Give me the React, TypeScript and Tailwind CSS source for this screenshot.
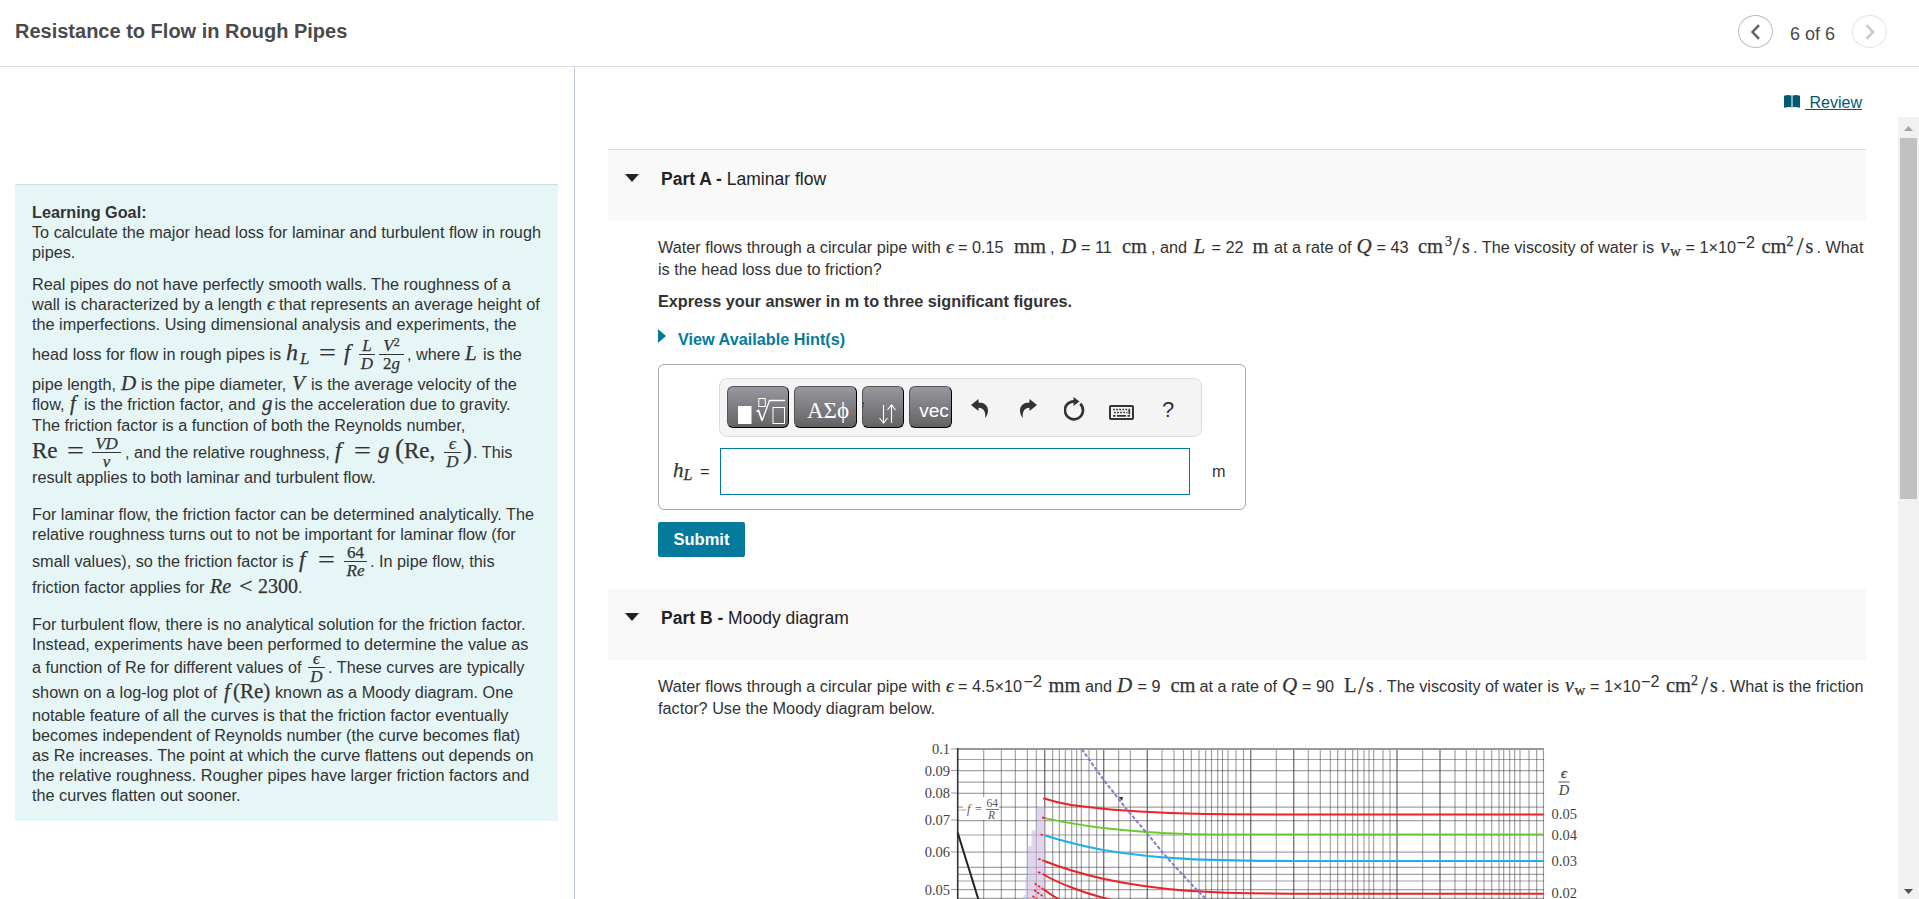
import type { ReactNode } from 'react';

interface BoxProps {
  className?: string;
  children?: ReactNode;
}

const SERIF = "font-['Liberation_Serif','DejaVu_Serif',serif]";

// One line of running text
function Line({ className = '', children }: BoxProps) {
  return <div className={`h-5 leading-5 whitespace-nowrap ${className}`}>{children}</div>;
}

// Text run with its own width
function S({ className = '', children }: BoxProps) {
  return <span className={`inline-block whitespace-pre ${className}`}>{children}</span>;
}

// Math run, never grows the line it sits in
function M({ className = '', children }: BoxProps) {
  return (
    <span className={`inline-block whitespace-pre leading-[0] [-webkit-text-stroke:0.25px] ${SERIF} ${className}`}>
      {children}
    </span>
  );
}

function Frac({ num, den, className = '' }: { num: ReactNode; den: ReactNode; className?: string }) {
  return (
    <span className={`-my-3 inline-flex flex-col items-stretch text-center align-[9px] text-[17px] leading-4 ${className}`}>
      <span className="border-b border-[#333]">{num}</span>
      <span className="mt-px">{den}</span>
    </span>
  );
}

function Eq({ className = '' }: BoxProps) {
  return (
    <M className={className}>
      <span className="inline-block origin-left scale-x-[1.3] not-italic">=</span>
    </M>
  );
}

function Header() {
  return (
    <header className="flex h-[67px] shrink-0 items-start justify-between border-b border-[#ddd] pl-[15px] pr-8">
      <h1 className="mt-[17px] text-[20px] leading-7 font-bold text-[#4a4a4a]">Resistance to Flow in Rough Pipes</h1>
      <div className="mt-[15px] flex items-start">
        <button className="flex h-[33px] w-[35px] items-center justify-center rounded-[50%] border border-[#bbb]">
          <svg width="10" height="16" viewBox="0 0 10 16" fill="none" stroke="#5b6466" strokeWidth="2.5">
            <path d="M8 1.2L1.5 8l6.5 6.8" />
          </svg>
        </button>
        <span className="ml-[17px] mt-[7px] w-[45px] text-[18px] leading-6 whitespace-nowrap text-[#4a4a4a]">6 of 6</span>
        <button className="ml-[17px] flex h-[33px] w-[35px] items-center justify-center rounded-[50%] border border-[#e3e3e3]">
          <svg width="10" height="16" viewBox="0 0 10 16" fill="none" stroke="#c8c8c8" strokeWidth="2.5">
            <path d="M1.5 1.2L8 8l-6.5 6.8" />
          </svg>
        </button>
      </div>
    </header>
  );
}

function LearningGoal() {
  return (
    <div className="mt-[117px] ml-[15px] h-[637px] w-[543px] border-t border-[#cfdfe0] bg-[#e6f6f7] pt-[17px] pl-[17px]">
      <Line className="font-bold">Learning Goal:</Line>
      <Line>To calculate the major head loss for laminar and turbulent flow in rough</Line>
      <Line>pipes.</Line>

      <Line className="mt-3">Real pipes do not have perfectly smooth walls. The roughness of a</Line>
      <Line>
        <S className="w-[235px]">wall is characterized by a length</S>
        <M className="w-[12px] text-[19px] italic">ϵ</M>
        <S>that represents an average height of</S>
      </Line>
      <Line>the imperfections. Using dimensional analysis and experiments, the</Line>
      <Line className="mt-2.5">
        <S className="w-[254px]">head loss for flow in rough pipes is</S>
        <M className="w-[14px] text-[24px] italic">h</M>
        <M className="w-[19px] align-[-4px] text-[17px] italic">L</M>
        <Eq className="w-[25px] text-[23px]" />
        <M className="w-[15px] text-[23px] italic">f</M>
        <M className="w-[20px] italic"><Frac className="w-[16px]" num="L" den="D" /></M>
        <M className="w-[28px] italic">
          <Frac
            className="w-[25px]"
            num={<>V<span className="align-[5px] text-[12px] leading-[0] not-italic">2</span></>}
            den={<><span className="not-italic">2</span>g</>}
          />
        </M>
        <S className="w-[58px]">, where</S>
        <M className="w-[18px] text-[21px] italic">L</M>
        <S>is the</S>
      </Line>
      <Line className="mt-2.5">
        <S className="w-[89px]">pipe length,</S>
        <M className="w-[20px] text-[21px] italic">D</M>
        <S className="w-[151px]">is the pipe diameter,</S>
        <M className="w-[19px] text-[21px] italic">V</M>
        <S>is the average velocity of the</S>
      </Line>
      <Line>
        <S className="w-[38px]">flow,</S>
        <M className="w-[14px] text-[21px] italic">f</M>
        <S className="w-[178px]">is the friction factor, and</S>
        <M className="w-[12.500px] text-[21px] italic">g</M>
        <S>is the acceleration due to gravity.</S>
      </Line>
      <Line className="mt-px">The friction factor is a function of both the Reynolds number,</Line>
      <Line className="mt-[7px]">
        <M className="w-[35px] text-[23px]">Re</M>
        <Eq className="w-[25px] text-[23px]" />
        <M className="w-[33px] italic"><Frac className="w-[29px]" num="VD" den="ν" /></M>
        <S className="w-[210px]">, and the relative roughness,</S>
        <M className="w-[19px] text-[23px] italic">f</M>
        <Eq className="w-[24px] text-[23px]" />
        <M className="w-[17px] text-[23px] italic">g</M>
        <M className="w-[9px] text-[27px]">(</M>
        <M className="w-[40px] text-[23px]">Re,</M>
        <M className="w-[19px] italic"><Frac className="w-[17px]" num="ϵ" den="D" /></M>
        <M className="w-[10px] text-[27px]">)</M>
        <S>. This</S>
      </Line>
      <Line className="mt-[5px]">result applies to both laminar and turbulent flow.</Line>

      <Line className="mt-[17px]">For laminar flow, the friction factor can be determined analytically. The</Line>
      <Line>relative roughness turns out to not be important for laminar flow (for</Line>
      <Line className="mt-[7px]">
        <S className="w-[267px]">small values), so the friction factor is</S>
        <M className="w-[19px] text-[23px] italic">f</M>
        <Eq className="w-[26px] text-[23px]" />
        <M className="w-[26px]"><Frac className="w-[23px]" num="64" den={<i>Re</i>} /></M>
        <S>. In pipe flow, this</S>
      </Line>
      <Line className="mt-[6px]">
        <S className="w-[178px]">friction factor applies for</S>
        <M className="w-[29px] text-[20px] italic">Re</M>
        <M className="w-[19px] text-[20px]"><span className="inline-block origin-left scale-x-[1.2]">&lt;</span></M>
        <M className="w-[40px] text-[20px]">2300</M>
        <S>.</S>
      </Line>

      <Line className="mt-[17px]">For turbulent flow, there is no analytical solution for the friction factor.</Line>
      <Line>Instead, experiments have been performed to determine the value as</Line>
      <Line className="mt-[3px]">
        <S className="w-[276px]">a function of Re for different values of</S>
        <M className="w-[20px] italic"><Frac className="w-[17px]" num="ϵ" den="D" /></M>
        <S>. These curves are typically</S>
      </Line>
      <Line className="mt-[5px]">
        <S className="w-[192px]">shown on a log-log plot of</S>
        <M className="w-[9px] text-[21px] italic">f</M>
        <M className="w-[42px] text-[21px]">(Re)</M>
        <S>known as a Moody diagram. One</S>
      </Line>
      <Line className="mt-[3px]">notable feature of all the curves is that the friction factor eventually</Line>
      <Line>becomes independent of Reynolds number (the curve becomes flat)</Line>
      <Line>as Re increases. The point at which the curve flattens out depends on</Line>
      <Line>the relative roughness. Rougher pipes have larger friction factors and</Line>
      <Line>the curves flatten out sooner.</Line>
    </div>
  );
}

function PartHeader({ part, title, className = '' }: { part: string; title: string; className?: string }) {
  return (
    <div className={`flex w-[1258px] items-start bg-[#f9f9f9] pl-[17px] ${className}`}>
      <svg width="14" height="8" viewBox="0 0 14 8" className="mt-[24px]">
        <path d="M0 0h14L7 8z" fill="#222" />
      </svg>
      <h2 className="ml-[22px] mt-[19px] text-[17.5px] leading-5 whitespace-pre text-[#222]">
        <b>{part} - </b>
        {title}
      </h2>
    </div>
  );
}

function KeypadButton({ className = '', children }: BoxProps) {
  return (
    <button
      className={`h-[42px] overflow-hidden rounded-[6px] border border-t-[#555] border-r-black border-b-black border-l-[#555] bg-linear-to-b from-[#9997a1] to-[#636363] text-white ${className}`}
    >
      {children}
    </button>
  );
}

function AnswerBox() {
  return (
    <div className="mt-[15px] h-[146px] w-[588px] rounded-[6px] border border-[#aaa]">
      <div className="mt-[13px] ml-[60px] flex h-[59px] w-[483px] items-start rounded-[8px] border border-[#ddd] bg-[#f4f4f4] pt-[7px] pl-[7px]">
        <KeypadButton className="w-[62px]">
          <svg width="60" height="40" viewBox="728 387 60 40" fill="none" stroke="#fff">
            <rect x="738" y="406" width="13.5" height="18" fill="#fff" stroke="none" />
            <rect x="758.8" y="398.5" width="6.5" height="8" />
            <path d="M756.5 411.5l2-1 3.6 10" strokeWidth="1.8" />
            <path d="M762 421l7.5-20.5h15.5" strokeWidth="1.3" />
            <rect x="773" y="407.5" width="11.5" height="16" />
          </svg>
        </KeypadButton>
        <KeypadButton className={`ml-[5px] w-[63px] pt-[7px] pl-[5px] text-[23px] ${SERIF}`}>ΑΣϕ</KeypadButton>
        <KeypadButton className="ml-[5px] w-[42px]">
          <svg width="40" height="40" viewBox="863 387 40 40" fill="none" stroke="#fff" strokeWidth="1.1">
            <path d="M883.5 405v18M879.5 418l4 5 4-5M891.5 423v-18M887.5 410l4-5 4 5" />
            <path d="M863.5 402.5v1.5M863.5 405.5v1" stroke="#222" />
          </svg>
        </KeypadButton>
        <KeypadButton className="ml-[5px] w-[43px] pt-[9px] pl-[7px] text-[19px]">vec</KeypadButton>
        <svg width="17" height="19" viewBox="0 0 17 19" fill="#333" className="mt-[13px] ml-[19px]">
          <path d="M0 6L7.5 0v3.4C13.5 3.4 17 6.8 17 11.5c0 3-1.2 5.6-3 7.5C15 14 13.5 9.2 7.5 8.800V12z" />
        </svg>
        <svg width="17" height="19" viewBox="0 0 17 19" fill="#333" className="mt-[13px] ml-[32px]">
          <path d="M17 6L9.500 0v3.400C3.500 3.400 0 6.800 0 11.500c0 3 1.200 5.600 3 7.500C2 14 3.500 9.200 9.500 8.800V12z" />
        </svg>
        <svg width="21" height="24" viewBox="0 0 21 24" className="mt-[11px] ml-[27px]">
          <path d="M16.200 6.800A9 9 0 1 1 10.500 4.300" fill="none" stroke="#333" strokeWidth="2.700" />
          <path d="M9.500 0l6 4.500-6 4.500z" fill="#333" />
        </svg>
        <svg width="25" height="15" viewBox="0 0 25 15" className="mt-[19px] ml-[24px]">
          <rect x="1" y="1" width="23" height="13" rx="1" fill="#f4f4f4" stroke="#333" strokeWidth="2" />
          <path d="M4 4.500h17M5 7.500h13.500" stroke="#333" strokeWidth="1.700" strokeDasharray="1.800 1.300" />
          <path d="M4 10.800h2.500M8 10.800h9M18.500 10.800h2.500M20.300 5v4" stroke="#333" strokeWidth="1.700" />
        </svg>
        <span className="mt-[10px] ml-[28px] text-[22px] leading-7 text-[#333]">?</span>
      </div>
      <div className="mt-[11px] flex h-[47px] items-start">
        <div className="w-[61px] pl-[14px]">
          <Line className="mt-[13px]">
            <M className="w-[10.500px] text-[21px] italic">h</M>
            <M className="w-[16.500px] align-[-3px] text-[16px] italic">L</M>
            <S>=</S>
          </Line>
        </div>
        <input className="h-[47px] w-[470px] border border-[#047a9c] bg-white" />
        <Line className="mt-[13px] ml-[22px]">m</Line>
      </div>
    </div>
  );
}

function PerSecond() {
  return (
    <>
      <M className="w-[9px] align-[-2px] text-[25px]">/</M>
      <M className="w-[11px] text-[20px]">s</M>
    </>
  );
}

function PartA() {
  return (
    <div className="ml-[50px] pt-4">
      <Line>
        <S className="w-[288px]">Water flows through a circular pipe with</S>
        <M className="w-[12px] text-[19px] italic">ϵ</M>
        <S className="w-[56px]">= 0.15</S>
        <M className="w-[36px] text-[20.5px]">mm</M>
        <S className="w-[11px]">,</S>
        <M className="w-[20px] text-[21px] italic">D</M>
        <S className="w-[41px]">= 11</S>
        <M className="w-[29px] text-[20.5px]">cm</M>
        <S className="w-[42.500px]">, and</S>
        <M className="w-[18px] text-[21px] italic">L</M>
        <S className="w-[41px]">= 22</S>
        <M className="w-[21.500px] text-[20.5px]">m</M>
        <S className="w-[82.500px]">at a rate of</S>
        <M className="w-[20px] text-[21px] italic">Q</M>
        <S className="w-[41.500px]">= 43</S>
        <M className="w-[27px] text-[20.5px]">cm</M>
        <M className="w-[8px] align-[7px] text-[14px]">3</M>
        <PerSecond />
        <S className="w-[187.500px]">. The viscosity of water is</S>
        <M className="w-[9.500px] text-[20px] italic">ν</M>
        <M className="w-[15.500px] align-[-3px] text-[15px]">w</M>
        <S className="w-[51px]">= 1×10</S>
        <S className="w-[25px] align-[5px] leading-[0]">−2</S>
        <M className="w-[25px] text-[20.5px]">cm</M>
        <M className="w-[10px] align-[7px] text-[14px]">2</M>
        <PerSecond />
        <S>. What</S>
      </Line>
      <Line className="mt-0.5">is the head loss due to friction?</Line>
      <Line className="mt-3 font-bold">Express your answer in m to three significant figures.</Line>
      <div className="mt-[18px] flex items-start font-bold text-[#047a9c]">
        <svg width="8" height="14" viewBox="0 0 8 14">
          <path d="M0 0l8 7-8 7z" fill="#047a9c" />
        </svg>
        <Line className="ml-3">View Available Hint(s)</Line>
      </div>
      <AnswerBox />
      <button className="mt-3 block h-[35px] w-[87px] rounded-[2px] bg-[#047a9c] pb-px text-[16.5px] font-bold text-white">
        Submit
      </button>
    </div>
  );
}

const gridX = [
  983.7, 1001.3, 1015.3, 1027.3, 1036.3, 1052.7, 1059.3, 1065.3, 1071.7, 1076.7, 1081.3, 1089, 1096.7,
  1118.7, 1130.3, 1162, 1174, 1183.5, 1191.3, 1199, 1205.7, 1211.5, 1217.7, 1222.5, 1228, 1236, 1243.5,
  1276.3, 1308.3, 1320.3, 1330.3, 1337.7, 1345.3, 1352.7, 1357.7, 1364, 1369, 1373.7, 1383, 1390,
  1422.7, 1455, 1466.3, 1476.3, 1484, 1491.7, 1499, 1503.7, 1509.7, 1514.7, 1520, 1529, 1536.7, 1543.5,
];
const majorX = [1044.7, 1103.7, 1147.3, 1250.7, 1293.7, 1397, 1440];
const gridY = [759.5, 770.7, 782.2, 793.3, 807.2, 820.6, 835, 852.2, 867.3, 874.3, 881, 889.7, 898.3];

const frictionLabels: [string, number][] = [
  ['0.1', 749],
  ['0.09', 770.5],
  ['0.08', 793],
  ['0.07', 820],
  ['0.06', 852],
  ['0.05', 889.5],
];
const roughnessLabels: [string, number][] = [
  ['0.05', 814],
  ['0.04', 834.5],
  ['0.03', 861],
  ['0.02', 893],
];

function MoodyDiagram() {
  return (
    <svg
      width="690"
      height="169"
      viewBox="900 730 690 169"
      fill="none"
      className={`mt-3 ml-[242px] block ${SERIF}`}
    >
      {gridX.map((x) => (
        <path key={x} d={`M${x} 749V899`} stroke="#333" strokeOpacity=".5" strokeWidth="1.1" />
      ))}
      {majorX.map((x) => (
        <path key={x} d={`M${x} 749V899`} stroke="#333" strokeOpacity=".65" strokeWidth="1.4" />
      ))}
      {gridY.map((y) => (
        <path key={y} d={`M957 ${y}H1544`} stroke="#333" strokeOpacity=".45" strokeWidth="1.2" />
      ))}
      <path d="M1036.500 807h8.500v92h-21.500v-4h2v-18h2v-31h4v-15.500h5z" fill="#c9b9e0" fillOpacity=".6" />
      <path d="M957 749H1544" stroke="#999" strokeWidth="1.8" />
      <path d="M957.700 748V899" stroke="#333" strokeWidth="1.6" />

      <rect x="963" y="797" width="36" height="23" fill="#fff" />
      <path d="M959 810h7" stroke="#aaa" />
      <g fill="#555">
        <text x="967" y="813" fontSize="12" fontStyle="italic">f</text>
        <text x="975" y="813" fontSize="12">=</text>
        <text x="986.500" y="807" fontSize="11.500">64</text>
        <text x="988" y="819" fontSize="11.500" fontStyle="italic">R</text>
      </g>
      <path d="M986 809.500h13" stroke="#555" strokeWidth=".8" />
      <path d="M957.700 832.700L978.300 899" stroke="#222" strokeWidth="2" />

      <g strokeWidth="2" stroke="#ec2227">
        <path d="M1043.300 798.300C1053 801.500 1062 803.500 1071 805C1100 809 1140 812.300 1187 813.500C1220 814.300 1240 814.400 1270 814.400H1543.700" />
        <path d="M1044.300 861C1062 868 1080 873.500 1103 878.700C1130 884.500 1160 888.500 1187 890.700C1215 892.500 1240 893.500 1290 893.700H1543.700" />
        <path d="M1042.700 874C1052 879.500 1062 884 1073 888C1083 892 1093 895 1103 897.700L1112 900" />
        <path d="M1043.300 889Q1051 895 1060 900" />
        <path
          d="M1038.300 858.700L1044 861M1038 872l4 1.500M1034.700 883.500L1043 889M1034 890l10 7M1032.500 896l5 3.500M1040.600 834.400l3 .8"
          strokeWidth="1.700"
          strokeDasharray="2.500 1.500"
        />
      </g>
      <path
        d="M1045 818.100C1062 822 1080 825 1103 828C1130 831 1160 833.300 1187 833.900C1210 834.600 1240 834.600 1270 834.600H1543.700"
        stroke="#6cc832"
        strokeWidth="2"
      />
      <path d="M1042 817.300l3 .8" stroke="#ec2227" strokeWidth="1.800" />
      <path
        d="M1044.300 835.300C1062 841 1080 845.500 1103 850C1130 854.500 1160 857.500 1187 858.900C1215 860.500 1260 861 1300 861H1543.700"
        stroke="#1fb0ea"
        strokeWidth="2.100"
      />
      <path
        d="M1081.700 749L1103 779L1126.700 809.300L1146.700 833L1166.700 857.300L1193 886L1206 899"
        stroke="#8a7cc8"
        strokeWidth="2"
        strokeDasharray="3.800 1.800"
      />
      <path d="M1118.500 797.200l4.500-.5-.8 4z" fill="#333" />

      {frictionLabels.map(([label, y]) => (
        <g key={label}>
          <text x="950" y={y + 5} textAnchor="end" fontSize="14.500" fill="#444">{label}</text>
          <path d={`M951 ${y}h6`} stroke="#999" />
        </g>
      ))}
      <g fill="#444" fontSize="14.500">
        {roughnessLabels.map(([label, y]) => (
          <text key={label} x="1551.500" y={y + 5}>{label}</text>
        ))}
        <text x="1564" y="778" textAnchor="middle" fontStyle="italic" stroke="#444" strokeWidth=".3">ϵ</text>
        <text x="1564" y="795" textAnchor="middle" fontStyle="italic">D</text>
      </g>
      <path d="M1558.500 782h11" stroke="#555" />
    </svg>
  );
}

function PartB() {
  return (
    <div className="ml-[50px] pt-4">
      <Line>
        <S className="w-[288px]">Water flows through a circular pipe with</S>
        <M className="w-[12px] text-[19px] italic">ϵ</M>
        <S className="w-[65.500px]">= 4.5×10</S>
        <S className="w-[25px] align-[5px] leading-[0]">−2</S>
        <M className="w-[36.500px] text-[20.5px]">mm</M>
        <S className="w-[32px]">and</S>
        <M className="w-[20.500px] text-[21px] italic">D</M>
        <S className="w-[33px]">= 9</S>
        <M className="w-[29px] text-[20.5px]">cm</M>
        <S className="w-[82.500px]">at a rate of</S>
        <M className="w-[20px] text-[21px] italic">Q</M>
        <S className="w-[42px]">= 90</S>
        <M className="w-[14px] text-[20.5px]">L</M>
        <M className="w-[8px] align-[-2px] text-[25px]">/</M>
        <M className="w-[12px] text-[20px]">s</M>
        <S className="w-[187px]">. The viscosity of water is</S>
        <M className="w-[9.500px] text-[20px] italic">ν</M>
        <M className="w-[15.500px] align-[-3px] text-[15px]">w</M>
        <S className="w-[51px]">= 1×10</S>
        <S className="w-[25px] align-[5px] leading-[0]">−2</S>
        <M className="w-[25px] text-[20.5px]">cm</M>
        <M className="w-[10px] align-[7px] text-[14px]">2</M>
        <PerSecond />
        <S>. What is the friction</S>
      </Line>
      <Line className="mt-0.5">factor? Use the Moody diagram below.</Line>
      <MoodyDiagram />
    </div>
  );
}

function Scrollbar() {
  return (
    <div className="flex w-[21px] shrink-0 flex-col items-center bg-[#f1f1f1]">
      <svg width="9" height="5" viewBox="0 0 9 5" className="mt-[9px]">
        <path d="M4.500 0L9 5H0z" fill="#a3a3a3" />
      </svg>
      <div className="mt-[7px] h-[361px] w-[17px] bg-[#c1c1c1]" />
      <svg width="9" height="5" viewBox="0 0 9 5" className="mt-auto mb-[5px]">
        <path d="M0 0h9L4.500 5z" fill="#505050" />
      </svg>
    </div>
  );
}

export default function App() {
  return (
    <div className="flex h-[899px] w-full flex-col overflow-hidden bg-white font-['Liberation_Sans',Arial,sans-serif] text-[16.24px] text-[#333]">
      <Header />
      <main className="flex min-h-0 flex-1">
        <aside className="w-[575px] shrink-0 border-r border-[#c0cbd8]">
          <LearningGoal />
        </aside>
        <section className="flex min-w-0 flex-1 flex-col">
          <div className="flex h-[50px] shrink-0 items-start justify-end pr-[57px] text-[#005a70]">
            <svg width="16" height="13" viewBox="0 0 16 13" className="mt-[28px] mr-[5px]" fill="#005a70">
              <path d="M0 .8Q4 -.6 7.500 .6V12.300Q4 11.500 0 12.700zM8.500 .6Q12 -.6 16 .8V12.700Q12 11.500 8.500 12.300z" />
            </svg>
            <a className="mt-[26px] text-[16px] leading-5 whitespace-pre underline"> Review</a>
          </div>
          <div className="flex min-h-0 flex-1 justify-between">
            <div className="min-w-0 overflow-hidden pt-8 pl-[33px]">
              <PartHeader part="Part A" title="Laminar flow" className="h-[72px] border-t border-[#ddd]" />
              <PartA />
              <PartHeader part="Part B" title="Moody diagram" className="mt-8 h-[71px]" />
              <PartB />
            </div>
            <Scrollbar />
          </div>
        </section>
      </main>
    </div>
  );
}
